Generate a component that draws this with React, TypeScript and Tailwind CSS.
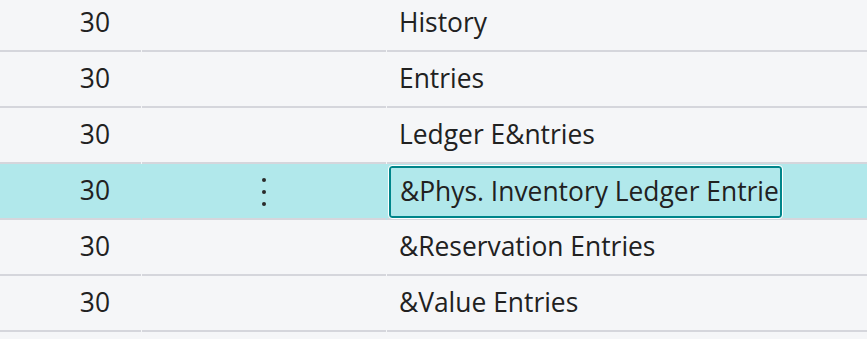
import React from "react";

const rows = [
  { num: "30", name: "History" },
  { num: "30", name: "Entries" },
  { num: "30", name: "Ledger E&ntries" },
  { num: "30", name: "&Phys. Inventory Ledger Entries", active: true },
  { num: "30", name: "&Reservation Entries" },
  { num: "30", name: "&Value Entries" },
  { num: "", name: "" },
];

export default function App() {
  return (
    <div
      className="w-[867px] h-[339px] overflow-hidden bg-[#f5f6f8] text-[#212121]"
      style={{ fontFamily: '"Open Sans", "Noto Sans", sans-serif' }}
    >
      <div className="-mt-[4px] flex flex-col">
        {rows.map((r, i) => (
          <div
            key={i}
            className={
              "grid grid-cols-[141px_244px_1fr] gap-x-px h-[56px] " +
              (r.active ? "bg-[#b1e8eb]" : "")
            }
          >
            <div className="flex items-center justify-end pr-[31px] border-b-2 border-[#d5d6dc] text-[26.4px]">
              {r.num}
            </div>
            <div className="flex items-center justify-center border-b-2 border-[#d5d6dc]">
              {r.active && (
                <div className="flex flex-col gap-[8px] pt-[1px]">
                  <span className="block w-[4px] h-[4px] rounded-full bg-[#2a2a2a]" />
                  <span className="block w-[4px] h-[4px] rounded-full bg-[#2a2a2a]" />
                  <span className="block w-[4px] h-[4px] rounded-full bg-[#2a2a2a]" />
                </div>
              )}
            </div>
            <div className="flex items-center border-b-2 border-[#d5d6dc] text-[26.4px] min-w-0">
              {r.active ? (
                <div className="ml-[2px] mt-[1px] w-[393px] h-[52px] border-2 border-[#00858a] rounded-[3px] outline outline-1 outline-white flex items-center pl-[9px] overflow-hidden whitespace-nowrap">
                  {r.name}
                </div>
              ) : (
                <span className="pl-[12px] whitespace-nowrap">{r.name}</span>
              )}
            </div>
          </div>
        ))}
      </div>
    </div>
  );
}
